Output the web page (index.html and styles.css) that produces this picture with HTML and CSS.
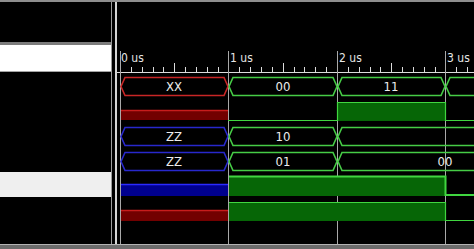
FILE: index.html
```html
<!DOCTYPE html>
<html lang="en">
  <head>
    <meta charset="UTF-8" />
    <meta name="viewport" content="width=device-width, initial-scale=1.0" />
    <title>Waveform</title>
    <link rel="stylesheet" href="styles.css">
  </head>
  <body>
    <div class="top-bar"></div>

    <div class="main">
      <div class="names">
        <div class="names-gap"></div>
        <div class="names-header"></div>
        <div class="names-rows">
          <div class="name-row"></div>
          <div class="name-row"></div>
          <div class="name-row"></div>
          <div class="name-row"></div>
          <div class="name-row selected"></div>
          <div class="name-row"></div>
        </div>
      </div>

      <div class="splitter"></div>

      <div class="wave">
        <svg width="357" height="242" viewBox="117 2 357 242">
          <!-- ruler -->
          <g class="ruler-text">
            <text x="121" y="62">0 us</text>
            <text x="230" y="62">1 us</text>
            <text x="339" y="62">2 us</text>
            <text x="447" y="62">3 us</text>
          </g>
          <line class="ruler" x1="117" y1="72.5" x2="474" y2="72.5" />
          <g id="ticks" class="ruler"></g>

          <!-- grid -->
          <line class="grid" x1="120.5" y1="51" x2="120.5" y2="244" />
          <line class="grid" x1="228.5" y1="51" x2="228.5" y2="244" />
          <line class="grid" x1="337.5" y1="51" x2="337.5" y2="244" />
          <line class="grid" x1="445.5" y1="51" x2="445.5" y2="244" />

          <!-- row 1 -->
          <path class="bus red" d="M121 86.5 L125 77.5 L224 77.5 L228 86.5 L224 95.5 L125 95.5 Z" />
          <path class="bus green" d="M229 86.5 L233 77.5 L333 77.5 L337 86.5 L333 95.5 L233 95.5 Z" />
          <path class="bus green" d="M338 86.5 L342 77.5 L441 77.5 L445 86.5 L441 95.5 L342 95.5 Z" />
          <path class="bus green" d="M446 86.5 L450 77.5 L480 77.5 M446 86.5 L450 95.5 L480 95.5" />
          <g class="value">
            <text x="174" y="91">XX</text>
            <text x="283" y="91">00</text>
            <text x="391" y="91">11</text>
          </g>

          <!-- row 2 -->
          <rect class="bar-red" x="121" y="110" width="107" height="10" />
          <line class="edge-red" x1="121" y1="110.5" x2="228" y2="110.5" />
          <rect class="bar-green" x="337" y="102" width="108" height="19" />
          <polyline class="bit" points="228,120.5 337.5,120.5 337.5,102.5 445.5,102.5 445.5,120.5 480,120.5" />

          <!-- row 3 -->
          <path class="bus blue" d="M121 136.5 L125 127.5 L224 127.5 L228 136.5 L224 145.5 L125 145.5 Z" />
          <path class="bus green" d="M229 136.5 L233 127.5 L333 127.5 L337 136.5 L333 145.5 L233 145.5 Z" />
          <path class="bus green" d="M338 136.5 L342 127.5 L480 127.5 M338 136.5 L342 145.5 L480 145.5" />
          <g class="value">
            <text x="174" y="141">ZZ</text>
            <text x="283" y="141">10</text>
          </g>

          <!-- row 4 -->
          <path class="bus blue" d="M121 161.5 L125 152.5 L224 152.5 L228 161.5 L224 170.5 L125 170.5 Z" />
          <path class="bus green" d="M229 161.5 L233 152.5 L333 152.5 L337 161.5 L333 170.5 L233 170.5 Z" />
          <path class="bus green" d="M338 161.5 L342 152.5 L480 152.5 M338 161.5 L342 170.5 L480 170.5" />
          <g class="value">
            <text x="174" y="166">ZZ</text>
            <text x="283" y="166">01</text>
            <text x="445" y="166">00</text>
          </g>

          <!-- row 5 (selected) -->
          <rect class="bar-blue" x="121" y="184" width="107" height="12" />
          <line class="edge-blue" x1="121" y1="184.5" x2="228" y2="184.5" />
          <rect class="bar-green" x="229" y="176" width="216" height="20" />
          <polyline class="bit thick" points="229,176.5 445.5,176.5 445.5,195 480,195" />

          <!-- row 6 -->
          <rect class="bar-red" x="121" y="210" width="107" height="11" />
          <line class="edge-red" x1="121" y1="210.5" x2="228" y2="210.5" />
          <rect class="bar-green" x="229" y="202" width="216" height="19" />
          <polyline class="bit" points="229,202.5 445.5,202.5 445.5,220.5 480,220.5" />
        </svg>
      </div>
    </div>

    <div class="bottom-bar"></div>

    <script>
      // ten divisions per microsecond, taller tick at the half
      var ticks = document.getElementById("ticks");
      var step = 108.5 / 10;
      for (var i = 1; i < 34; i++) {
        if (i % 10 === 0) continue;
        var x = Math.round(120 + i * step) + 0.5;
        var line = document.createElementNS("http://www.w3.org/2000/svg", "line");
        line.setAttribute("x1", x);
        line.setAttribute("x2", x);
        line.setAttribute("y1", i % 5 === 0 ? 63 : 67);
        line.setAttribute("y2", 72);
        ticks.appendChild(line);
      }
    </script>
  </body>
</html>
```

FILE: styles.css
```css
html,
body {
  margin: 0;
  padding: 0;
}
body {
  width: 474px;
  height: 249px;
  overflow: hidden;
  background: #000;
  font-family: "DejaVu Sans Condensed", "Liberation Sans Narrow", "Liberation Sans", sans-serif;
}
.top-bar {
  height: 2px;
  background: #8e8e8e;
}
.main {
  display: flex;
  height: 242px;
}
.names {
  width: 111px;
  border-right: 1px solid #9c9c9c;
  background: #000;
}
.names-gap {
  height: 40px;
}
.names-header {
  height: 26px;
  background: #fff;
  border-top: 3px solid #7c7c7c;
  border-bottom: 1px solid #a4a4a4;
}
.names-rows {
  padding-top: 100px;
}
.names-rows .name-row {
  display: none;
}
.names-rows .selected {
  display: block;
  height: 25px;
  background: #efefef;
}
.splitter {
  width: 3px;
  border-right: 2px solid #d4d4d4;
}
.wave {
  flex: 1;
  overflow: hidden;
}
.wave svg {
  display: block;
}
.bottom-bar {
  height: 4px;
  border-top: 1px solid #b4b4b4;
  background: #6c6c6c;
}
.ruler-text text {
  fill: #e6e6e6;
  font-size: 12px;
}
.ruler line,
line.ruler {
  stroke: #dcdcdc;
  stroke-width: 1;
}
.grid {
  stroke: #a9a9a9;
  stroke-width: 1;
}
.bus {
  fill: #000;
  stroke-width: 1.6;
}
.bus.red {
  stroke: #c82626;
}
.bus.green {
  fill: none;
  stroke: #46cc46;
}
.bus.blue {
  stroke: #2828cc;
}
.value text {
  fill: #ececec;
  font-size: 13px;
  text-anchor: middle;
}
.bar-red {
  fill: #720000;
}
.edge-red {
  stroke: #c81c1c;
  stroke-width: 1.5;
}
.bar-blue {
  fill: #00008e;
}
.edge-blue {
  stroke: #2a2aff;
  stroke-width: 1.5;
}
.bar-green {
  fill: #066606;
}
.bit {
  fill: none;
  stroke: #40d640;
  stroke-width: 1.2;
}
.bit.thick {
  stroke-width: 2;
}
```
